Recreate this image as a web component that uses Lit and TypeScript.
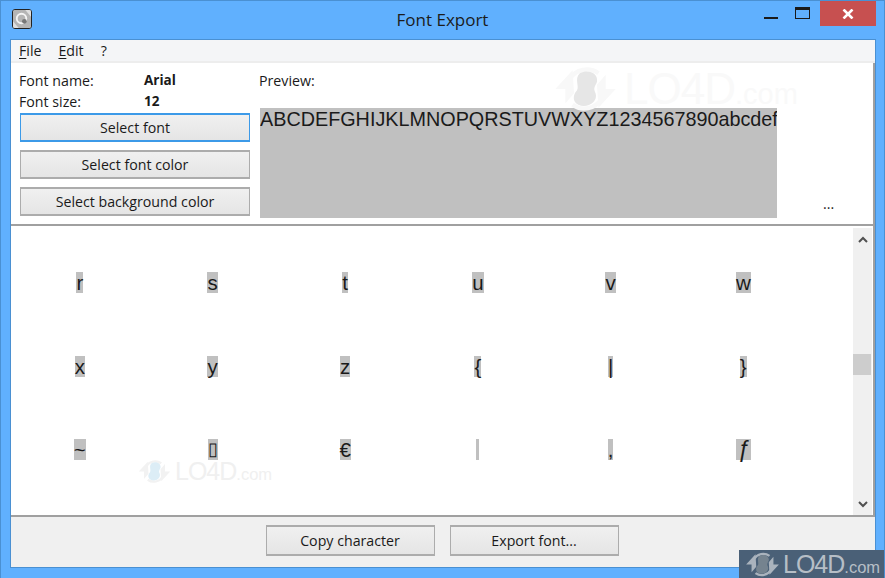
import { LitElement, html, css, svg } from "lit";
import { customElement } from "lit/decorators.js";

const ROWS = [
  ["r", "s", "t", "u", "v", "w"],
  ["x", "y", "z", "{", "|", "}"],
  ["~", "▯", "€", "", ",", "ƒ"],
];

const logo = (a: string, b: string) => svg`
  <svg class="mark" viewBox="0 0 44 32">
    <path d="M11 9 A14 14 0 0 1 31 5" fill="none" stroke="${a}" stroke-width="3"/>
    <path d="M33 23 A14 14 0 0 1 13 27" fill="none" stroke="${a}" stroke-width="3"/>
    <path d="M13 3 L1 16 L8 16 L8 26 L14 19 Z" fill="${a}"/>
    <path d="M31 29 L43 16 L36 16 L36 6 L30 13 Z" fill="${a}"/>
    <path d="M18 5 C24 2 31 5 30 11 C29 14 27 15 29 19 C31 25 23 30 17 27 C13 25 13 20 16 17 C18 14 14 9 18 5 Z" fill="${b}"/>
  </svg>`;

@customElement("app-root")
export class AppRoot extends LitElement {
  static styles = css`
    :host {
      display: block;
      width: 885px;
      height: 578px;
      background: #60b0fe;
      font-family: "Open Sans", "Noto Sans", sans-serif;
      font-size: 14.2px;
      color: #1a1a1a;
      overflow: hidden;
      position: relative;
      box-sizing: border-box;
      border: 1px solid #4a90d2;
      border-width: 1px 1px 0 1px;
    }
    .titlebar {
      height: 38px;
      display: flex;
      align-items: flex-start;
      position: relative;
    }
    .appicon {
      width: 20px;
      height: 20px;
      margin: 8px 0 0 11px;
      border: 1px solid #222;
      border-radius: 3px;
      background: #c8c8c8;
      display: flex;
      box-sizing: border-box;
      overflow: hidden;
    }
    .appicon svg { width: 100%; height: 100%; }
    .title {
      position: absolute;
      left: 0;
      right: 0;
      top: 8px;
      text-align: center;
      font-size: 17px;
      color: #1c1c1c;
      line-height: 22px;
    }
    .controls {
      margin-left: auto;
      display: flex;
      align-items: flex-start;
      margin-right: 8px;
      position: relative;
    }
    .min {
      width: 14px;
      height: 2px;
      background: #1a1a1a;
      margin: 16px 17px 0 0;
    }
    .max {
      width: 13px;
      height: 8px;
      border: 1px solid #1a1a1a;
      border-top-width: 3px;
      margin: 6px 10px 0 0;
    }
    .close {
      width: 56px;
      height: 25px;
      background: #c75050;
      display: flex;
      align-items: center;
      justify-content: center;
    }
    .close svg { width: 12px; height: 10px; }
    .client {
      margin: 0 8px 0 9px;
      height: 529px;
      border: 1px solid #4a90d2;
      background: #f0f0f0;
      display: flex;
      flex-direction: column;
      box-sizing: border-box;
    }
    .menu {
      height: 21px;
      background: #f4f5f7;
      border-bottom: 2px solid #ededed;
      display: flex;
      gap: 17px;
      padding: 0 0 0 8px;
      align-items: center;
      flex: none;
    }
    .menu u { text-underline-offset: 2px; }
    .top {
      height: 161px;
      background: #fff;
      display: flex;
      flex: none;
      padding: 0 0 0 9px;
      border-right: 2px solid #a0a0a0;
      border-bottom: 2px solid #a0a0a0;
    }
    .left {
      width: 230px;
      flex: none;
      display: flex;
      flex-direction: column;
    }
    .info {
      display: grid;
      grid-template-columns: 125px 1fr;
      line-height: 21px;
      padding-top: 7px;
      margin: 0 0 1px -1px;
    }
    .info b { font-weight: 700; font-size: 13.5px; }
    .btn {
      height: 29px;
      box-sizing: border-box;
      border: 1px solid #acacac;
      border-width: 2px 1px;
      background: linear-gradient(#f0f0f0, #e5e5e5);
      display: flex;
      align-items: center;
      justify-content: center;
      margin-bottom: 8px;
      width: 230px;
      flex: none;
    }
    .btn.focus { border-color: #3c9ae8; }
    .right {
      margin-left: 10px;
      flex: 1;
      display: flex;
      flex-direction: column;
      min-width: 0;
    }
    .plabel {
      line-height: 20px;
      padding-top: 8px;
      height: 45px;
      box-sizing: border-box;
      flex: none;
      margin-left: -1px;
    }
    .previewrow { display: flex; align-items: flex-end; }
    .preview {
      width: 517px;
      height: 110px;
      background: #c0c0c0;
      font-family: "Liberation Sans", Arial, sans-serif;
      font-size: 19.8px;
      line-height: 23px;
      color: #1a1a1a;
      overflow: hidden;
      white-space: nowrap;
      flex: none;
    }
    .dots {
      margin-left: 46px;
      line-height: 14px;
      height: 14px;
      margin-bottom: 7px;
    }
    .mid {
      flex: 1;
      min-height: 0;
      display: flex;
      background: #fff;
      border-right: 2px solid #a0a0a0;
      border-bottom: 2px solid #a0a0a0;
    }
    .grid {
      flex: 1;
      display: grid;
      grid-template-columns: repeat(6, 132.7px);
      grid-auto-rows: 83.5px;
      padding: 15px 0 0 2.5px;
      min-width: 0;
      font-family: "Liberation Sans", Arial, sans-serif;
      font-size: 20.5px;
      color: #1a1a1a;
    }
    .cell {
      display: flex;
      justify-content: center;
      align-items: center;
    }
    .cell span {
      background: #c0c0c0;
      height: 21px;
      line-height: 21px;
      min-width: 1px;
      display: block;
    }
    .cell span.empty { width: 3px; }
    .cell span.it { font-style: italic; font-size: 23px; padding: 0 1px; }
    .cell span.box { font-size: 18px; }
    .scroll {
      width: 19px;
      margin: 2px 1px 0 0;
      background: #f0f0f0;
      display: flex;
      flex-direction: column;
      align-items: stretch;
      flex: none;
    }
    .arrow { height: 22px; display: flex; align-items: center; justify-content: center; flex: none; }
    .arrow svg { width: 10px; height: 7px; }
    .spacer { height: 104px; flex: none; }
    .thumb { height: 21px; background: #cdcdcd; flex: none; width: 18px; }
    .grow { flex: 1; }
    .bottom {
      height: 50px;
      flex: none;
      display: flex;
      justify-content: center;
      gap: 15px;
      padding: 8px 2px 0 0;
      box-sizing: border-box;
    }
    .bottom .btn { width: 169px; height: 31px; margin: 0; }
    .wm {
      position: absolute;
      display: flex;
      align-items: center;
      font-family: "Liberation Sans", Arial, sans-serif;
      letter-spacing: -1px;
      white-space: nowrap;
    }
    .wm .mark { flex: none; }
    .wm small { font-size: 0.66em; letter-spacing: 0; }
    .wm1 { left: 551px; top: 63px; font-size: 44px; color: #f9f9f9; gap: 5px; }
    .wm1 .mark { width: 67px; height: 46px; }
    .wm2 { left: 137px; top: 456px; font-size: 25px; color: #f0f0f0; gap: 4px; }
    .wm2 .mark { width: 33px; height: 25px; }
    .wm3 {
      left: 738px;
      top: 549px;
      width: 147px;
      height: 29px;
      background: #4a6077;
      color: #b6bec6;
      font-size: 25px;
      padding-left: 6px;
      box-sizing: border-box;
      gap: 3px;
    }
    .wm3 .mark { width: 35px; height: 25px; }
  `;

  render() {
    return html`
      <div class="titlebar">
        <div class="appicon">
          <svg viewBox="0 0 19 19">
            <rect width="19" height="19" fill="#b5b5b5"/>
            <path d="M0 12 L6 19 L0 19 Z M13 0 L19 0 L19 7 Z" fill="#e0e0e0"/>
            <circle cx="9" cy="9" r="5" fill="none" stroke="#f4f4f4" stroke-width="2"/>
            <circle cx="12" cy="12" r="2.5" fill="#777"/>
          </svg>
        </div>
        <div class="title">Font Export</div>
        <div class="controls">
          <div class="min"></div>
          <div class="max"></div>
          <div class="close">
            <svg viewBox="0 0 12 10"><path d="M1.5 0.5 L10.5 9.5 M10.5 0.5 L1.5 9.5" stroke="#fff" stroke-width="2.6" fill="none"/></svg>
          </div>
        </div>
      </div>
      <div class="client">
        <div class="menu">
          <span><u>F</u>ile</span>
          <span><u>E</u>dit</span>
          <span>?</span>
        </div>
        <div class="top">
          <div class="left">
            <div class="info">
              <span>Font name:</span><b>Arial</b>
              <span>Font size:</span><b>12</b>
            </div>
            <div class="btn focus">Select font</div>
            <div class="btn">Select font color</div>
            <div class="btn">Select background color</div>
          </div>
          <div class="right">
            <div class="plabel">Preview:</div>
            <div class="previewrow">
              <div class="preview">ABCDEFGHIJKLMNOPQRSTUVWXYZ1234567890abcdef</div>
              <div class="dots">...</div>
            </div>
          </div>
        </div>
        <div class="mid">
          <div class="grid">
            ${ROWS.flat().map(
              (c) => html`<div class="cell"><span class="${c === "" ? "empty" : c === "ƒ" ? "it" : c === "▯" ? "box" : ""}">${c}</span></div>`
            )}
          </div>
          <div class="scroll">
            <div class="arrow">
              <svg viewBox="0 0 10 7"><path d="M1 6 L5 2 L9 6" fill="none" stroke="#505050" stroke-width="2"/></svg>
            </div>
            <div class="spacer"></div>
            <div class="thumb"></div>
            <div class="grow"></div>
            <div class="arrow">
              <svg viewBox="0 0 10 7"><path d="M1 1 L5 5 L9 1" fill="none" stroke="#505050" stroke-width="2"/></svg>
            </div>
          </div>
        </div>
        <div class="bottom">
          <div class="btn">Copy character</div>
          <div class="btn">Export font...</div>
        </div>
      </div>
      <div class="wm wm1">${logo("#f8f8f8", "#e6e6e6")}<span>LO4D<small>.com</small></span></div>
      <div class="wm wm2">${logo("#f2f2f2", "#dcedf6")}<span>LO4D<small>.com</small></span></div>
      <div class="wm wm3">${logo("#aab3bd", "#75838f")}<span>LO4D<small>.com</small></span></div>
    `;
  }
}
